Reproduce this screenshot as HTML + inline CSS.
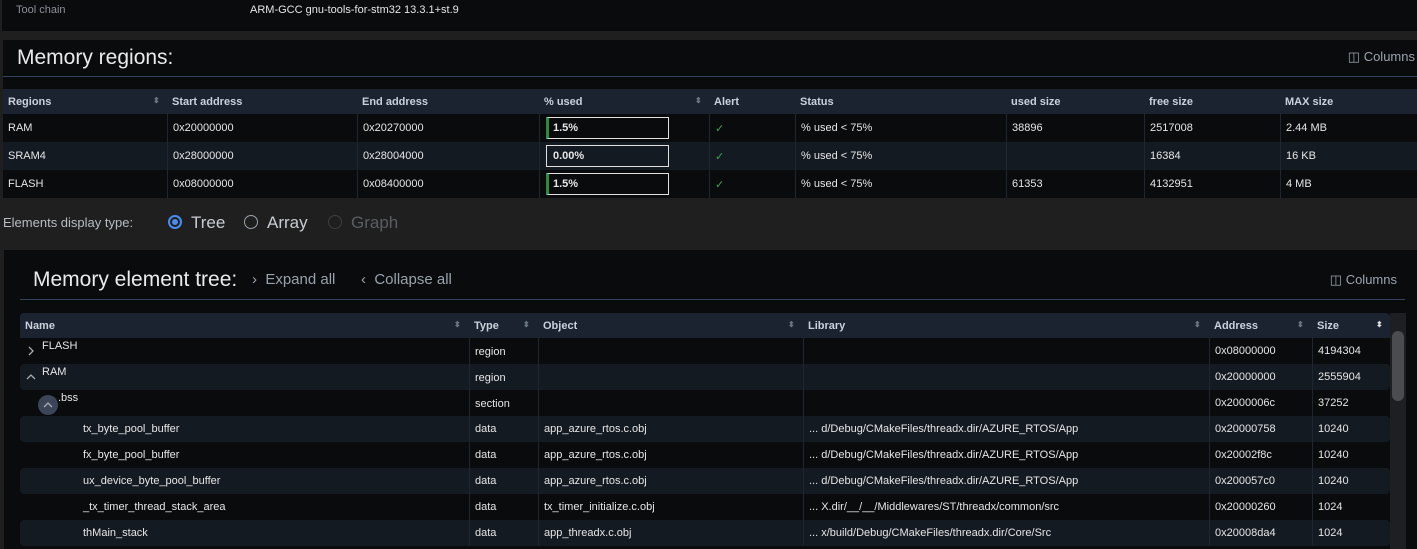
<!DOCTYPE html>
<html style="overflow:hidden;height:549px"><head><meta charset="utf-8"><style>
*{margin:0;padding:0;box-sizing:border-box}
body{width:1417px;height:549px;overflow:hidden;background:#1f1f1f;font-family:"Liberation Sans",sans-serif;color:#e6e6e6;position:relative;font-size:11px}
.a{position:absolute}
.panel{background:#0a0b0d;overflow:hidden}
.hdr{background:#1b2330;color:#c9d1dc;font-weight:bold;font-size:11px}
.cell{position:absolute;top:0;height:100%;display:flex;align-items:center;padding-left:5px;white-space:nowrap}
.vl{border-left:1px solid #1e2632}
.row{position:absolute;left:0;right:0}
.alt{background:#141a22}
.sort{position:absolute;right:8px;color:#6b7686;font-size:8px}
.chk{color:#3fa34d;font-size:11px}
.bar{position:absolute;left:6px;top:3px;width:123px;height:22px;border:1px solid #e0e0e0;border-left:3px solid #2e8b3e;font-weight:bold;display:flex;align-items:center;padding-left:4px}
</style></head><body>
<div class="a panel" style="left:2px;top:0;width:1415px;height:31px">
 <div class="a" style="left:14px;top:4px;color:#8a8f96;font-size:11px">Tool chain</div>
 <div class="a" style="left:248px;top:4px;color:#e6e6e6;font-size:11px">ARM-GCC gnu-tools-for-stm32 13.3.1+st.9</div>
</div>
<div class="a panel" style="left:3px;top:40px;width:1414px;height:158px">
 <div class="a" style="left:14px;top:6px;font-size:21px;color:#eaeaea">Memory regions:</div>
 <div class="a" style="right:2px;top:9px;font-size:13px;color:#9aa3ad">◫ Columns</div>
 <div class="a" style="left:0;right:0;top:36px;border-top:1px solid #34435a"></div>
 <div class="a hdr" style="left:0;right:0;top:49px;height:25px">
  <div class="cell" style="left:0">Regions</div><div class="sort" style="left:150px;top:7px">⬍</div>
  <div class="cell" style="left:164px">Start address</div>
  <div class="cell" style="left:354px">End address</div>
  <div class="cell" style="left:536px">% used</div><div class="sort" style="left:692px;top:7px">⬍</div>
  <div class="cell" style="left:706px">Alert</div>
  <div class="cell" style="left:792px">Status</div>
  <div class="cell" style="left:1003px">used size</div>
  <div class="cell" style="left:1141px">free size</div>
  <div class="cell" style="left:1277px">MAX size</div>
 </div>
 <div class="a" style="left:0;right:0;top:74px;height:84px">
  <div class="row" style="top:0;height:28px">
   <div class="cell" style="left:0">RAM</div><div class="cell vl" style="left:164px">0x20000000</div><div class="cell vl" style="left:354px">0x20270000</div><div class="cell vl" style="left:536px;width:170px"><div class="bar">1.5%</div></div><div class="cell vl" style="left:706px"><span class="chk">✓</span></div><div class="cell vl" style="left:792px">% used &lt; 75%</div><div class="cell vl" style="left:1003px">38896</div><div class="cell vl" style="left:1141px">2517008</div><div class="cell vl" style="left:1277px">2.44 MB</div>
  </div>
  <div class="row alt" style="top:28px;height:28px">
   <div class="cell" style="left:0">SRAM4</div><div class="cell vl" style="left:164px">0x28000000</div><div class="cell vl" style="left:354px">0x28004000</div><div class="cell vl" style="left:536px;width:170px"><div class="bar" style="border-left:1px solid #e0e0e0;padding-left:6px">0.00%</div></div><div class="cell vl" style="left:706px"><span class="chk">✓</span></div><div class="cell vl" style="left:792px">% used &lt; 75%</div><div class="cell vl" style="left:1003px"></div><div class="cell vl" style="left:1141px">16384</div><div class="cell vl" style="left:1277px">16 KB</div>
  </div>
  <div class="row" style="top:56px;height:28px">
   <div class="cell" style="left:0">FLASH</div><div class="cell vl" style="left:164px">0x08000000</div><div class="cell vl" style="left:354px">0x08400000</div><div class="cell vl" style="left:536px;width:170px"><div class="bar">1.5%</div></div><div class="cell vl" style="left:706px"><span class="chk">✓</span></div><div class="cell vl" style="left:792px">% used &lt; 75%</div><div class="cell vl" style="left:1003px">61353</div><div class="cell vl" style="left:1141px">4132951</div><div class="cell vl" style="left:1277px">4 MB</div>
  </div>
 </div>
</div>
<div class="a" style="left:3px;top:215px;font-size:13px;color:#b8bcc2">Elements display type:</div>
<div class="a" style="left:168px;top:215px;width:14px;height:14px;border-radius:50%;border:2px solid #4a8cf0"><div style="margin:2px;width:6px;height:6px;border-radius:50%;background:#4a8cf0"></div></div>
<div class="a" style="left:191px;top:213px;font-size:17px;color:#c8ccd2">Tree</div>
<div class="a" style="left:244px;top:215px;width:14px;height:14px;border-radius:50%;border:1px solid #9aa0a8"></div>
<div class="a" style="left:267px;top:213px;font-size:17px;color:#c8ccd2">Array</div>
<div class="a" style="left:328px;top:215px;width:14px;height:14px;border-radius:50%;border:1px solid #3a3d42"></div>
<div class="a" style="left:351px;top:213px;font-size:17px;color:#5a5d62">Graph</div>

<div class="a panel" style="left:4px;top:250px;width:1413px;height:299px">
 <div class="a" style="left:29px;top:18px;font-size:21px;color:#eaeaea">Memory element tree:</div>
 <div class="a" style="left:248px;top:21px;font-size:15px;color:#98a2ae">›&nbsp; Expand all</div>
 <div class="a" style="left:357px;top:21px;font-size:15px;color:#98a2ae">‹&nbsp; Collapse all</div>
 <div class="a" style="right:20px;top:22px;font-size:13px;color:#9aa3ad">◫ Columns</div>
 <div class="a" style="left:16px;width:1385px;top:49px;border-top:1px solid #34435a"></div>
 <div class="a hdr" style="left:16px;width:1370px;top:63px;height:25px;border-radius:4px 4px 0 0">
  <div class="cell" style="left:0">Name</div><div class="sort" style="left:434px;top:7px">⬍</div>
  <div class="cell" style="left:449px">Type</div><div class="sort" style="left:503px;top:7px">⬍</div>
  <div class="cell" style="left:518px">Object</div><div class="sort" style="left:768px;top:7px">⬍</div>
  <div class="cell" style="left:783px">Library</div><div class="sort" style="left:1174px;top:7px">⬍</div>
  <div class="cell" style="left:1189px">Address</div><div class="sort" style="left:1277px;top:7px">⬍</div>
  <div class="cell" style="left:1292px">Size</div><div class="sort" style="left:1356px;top:7px;color:#ddd">⬍</div>
 </div>
 <div class="a" style="left:1386px;top:63px;width:16px;height:236px;background:#1e1f22"><div style="margin:18px 2px 0;height:70px;border-radius:6px;background:#4a4c50"></div></div>
 <div class="a" style="left:16px;width:1370px;top:88px;height:211px;font-size:11px;overflow:hidden">
  <div class="row" style="top:0;height:26px"><svg class="a" style="left:7px;top:8px" width="8" height="10"><path d="M2 1l4 4-4 4" stroke="#aaa" fill="none" stroke-width="1.3"/></svg><div class="a" style="left:22px;top:2px">FLASH</div><div class="cell vl" style="left:449px;padding-top:2px">region</div><div class="cell vl" style="left:518px"></div><div class="cell vl" style="left:783px"></div><div class="cell vl" style="left:1189px">0x08000000</div><div class="cell vl" style="left:1292px">4194304</div></div>
  <div class="row alt" style="top:26px;height:26px;border-radius:4px"><svg class="a" style="left:6px;top:9px" width="10" height="8"><path d="M1 6l4-4 4 4" stroke="#aaa" fill="none" stroke-width="1.3"/></svg><div class="a" style="left:22px;top:2px">RAM</div><div class="cell vl" style="left:449px;padding-top:2px">region</div><div class="cell vl" style="left:518px"></div><div class="cell vl" style="left:783px"></div><div class="cell vl" style="left:1189px">0x20000000</div><div class="cell vl" style="left:1292px">2555904</div></div>
  <div class="row" style="top:52px;height:26px"><div class="a" style="left:18px;top:5px;width:20px;height:20px;border-radius:50%;background:#3a4658"><svg style="position:absolute;left:5px;top:6px" width="10" height="8"><path d="M1 6l4-4 4 4" stroke="#aab" fill="none" stroke-width="1.3"/></svg></div><div class="a" style="left:38px;top:2px">.bss</div><div class="cell vl" style="left:449px;padding-top:2px">section</div><div class="cell vl" style="left:518px"></div><div class="cell vl" style="left:783px"></div><div class="cell vl" style="left:1189px">0x2000006c</div><div class="cell vl" style="left:1292px">37252</div></div>
  <div class="row alt" style="top:78px;height:26px;border-radius:4px"><div class="cell" style="left:58px">tx_byte_pool_buffer</div><div class="cell vl" style="left:449px">data</div><div class="cell vl" style="left:518px">app_azure_rtos.c.obj</div><div class="cell vl" style="left:783px">... d/Debug/CMakeFiles/threadx.dir/AZURE_RTOS/App</div><div class="cell vl" style="left:1189px">0x20000758</div><div class="cell vl" style="left:1292px">10240</div></div>
  <div class="row" style="top:104px;height:26px"><div class="cell" style="left:58px">fx_byte_pool_buffer</div><div class="cell vl" style="left:449px">data</div><div class="cell vl" style="left:518px">app_azure_rtos.c.obj</div><div class="cell vl" style="left:783px">... d/Debug/CMakeFiles/threadx.dir/AZURE_RTOS/App</div><div class="cell vl" style="left:1189px">0x20002f8c</div><div class="cell vl" style="left:1292px">10240</div></div>
  <div class="row alt" style="top:130px;height:26px;border-radius:4px"><div class="cell" style="left:58px">ux_device_byte_pool_buffer</div><div class="cell vl" style="left:449px">data</div><div class="cell vl" style="left:518px">app_azure_rtos.c.obj</div><div class="cell vl" style="left:783px">... d/Debug/CMakeFiles/threadx.dir/AZURE_RTOS/App</div><div class="cell vl" style="left:1189px">0x200057c0</div><div class="cell vl" style="left:1292px">10240</div></div>
  <div class="row" style="top:156px;height:26px"><div class="cell" style="left:58px">_tx_timer_thread_stack_area</div><div class="cell vl" style="left:449px">data</div><div class="cell vl" style="left:518px">tx_timer_initialize.c.obj</div><div class="cell vl" style="left:783px">... X.dir/__/__/Middlewares/ST/threadx/common/src</div><div class="cell vl" style="left:1189px">0x20000260</div><div class="cell vl" style="left:1292px">1024</div></div>
  <div class="row alt" style="top:182px;height:26px;border-radius:4px"><div class="cell" style="left:58px">thMain_stack</div><div class="cell vl" style="left:449px">data</div><div class="cell vl" style="left:518px">app_threadx.c.obj</div><div class="cell vl" style="left:783px">... x/build/Debug/CMakeFiles/threadx.dir/Core/Src</div><div class="cell vl" style="left:1189px">0x20008da4</div><div class="cell vl" style="left:1292px">1024</div></div>
 </div>
</div>
</body></html>
